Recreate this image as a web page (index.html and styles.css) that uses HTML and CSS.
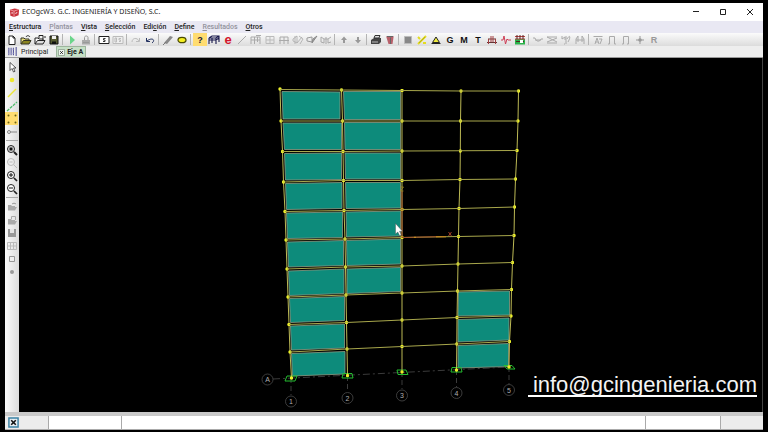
FILE: index.html
```html
<!DOCTYPE html>
<html lang="es">
<head>
<meta charset="utf-8">
<title>ECOgcW3</title>
<link rel="stylesheet" href="styles.css">
</head>
<body>
<div class="window">
  <header class="titlebar">
    <svg class="logo" viewBox="0 0 12 12"><path d="M1 3 6 1.500 11 2.500 10.500 9 5.500 11 1.500 9.500Z" fill="#c8323c"/><path d="M1 3 5.500 4.500 11 2.500M5.500 4.500V11" stroke="#f0a0a4" fill="none"/><path d="M2.500 6.500h2M7 7l2-1" stroke="#fff"/></svg>
    <h1>ECOgcW3. G.C. INGENIERÍA Y DISEÑO, S.C.</h1>
    <div class="controls">
      <button aria-label="Minimizar"><svg viewBox="0 0 12 12"><path d="M3 5.500h6"/></svg></button>
      <button aria-label="Maximizar"><svg viewBox="0 0 12 12"><path d="M3.500 3.500h5v5h-5z"/></svg></button>
      <button aria-label="Cerrar"><svg viewBox="0 0 12 12"><path d="m3 3 6 6M9 3 3 9"/></svg></button>
    </div>
  </header>

  <nav class="menu">
    <button><u>E</u>structura</button>
    <button disabled><u>P</u>lantas</button>
    <button><u>V</u>ista</button>
    <button><u>S</u>elección</button>
    <button>Edi<u>c</u>ión</button>
    <button><u>D</u>efine</button>
    <button disabled><u>R</u>esultados</button>
    <button><u>O</u>tros</button>
  </nav>

  <div class="toolbar">
    <button aria-label="Nuevo"><svg viewBox="0 0 12 12"><path d="M3 2h4l2 2v6.500H3zM7 2v2h2" fill="#fff" stroke="#222"/></svg></button>
    <button aria-label="Abrir"><svg viewBox="0 0 12 12"><path d="M1 10V4h3l1 1h4v2" fill="#e8e080" stroke="#332"/><path d="M1 10 3.500 6.500H11L9 10z" fill="#8a8420" stroke="#332"/><path d="M6 3c1-2 3-1.500 4 0" stroke="#222" fill="none"/></svg></button>
    <button aria-label="Importar"><svg viewBox="0 0 12 12"><path d="M1 10V4h3l1 1h4v2" fill="#fff" stroke="#222"/><path d="M1 10 3.500 6.500H11L9 10z" fill="#ddd" stroke="#222"/><path d="M5 4V1.500h4v4M10 3h2" stroke="#222" fill="none"/></svg></button>
    <button aria-label="Guardar"><svg viewBox="0 0 12 12"><path d="M2 2h8v8H2z" fill="#555a30" stroke="#111"/><path d="M4 2h4v3H4z" fill="#eee"/><path d="M4 7.500h4V10H4z" fill="#111"/></svg></button>
    <i></i>
    <button aria-label="Calcular"><svg viewBox="0 0 12 12"><path d="M4 1.500 9 6 4 10.500z" fill="#6bd58b"/></svg></button>
    <button aria-label="Bloquear"><svg viewBox="0 0 12 12"><path d="M2 6h8v4.500H2z" fill="#aaa"/><path d="M4.500 6V3.500c0-2 3.500-2 3.500 0V6M3 8.500h6" stroke="#999" fill="none"/></svg></button>
    <i></i>
    <button aria-label="Sección"><svg viewBox="0 0 12 12"><path d="M1 2.500h10v7H1z" fill="#fff" stroke="#222"/><path d="M7.500 4.500h-2v1.500h1.500v1.500h-2" stroke="#333" fill="none"/></svg></button>
    <button aria-label="Doble sección"><svg viewBox="0 0 12 12"><path d="M1 2.500h10v7H1z" fill="#eee" stroke="#bbb"/><path d="M3 4v4h1.500V4zM9 4.500H7V6h1.500v1.500H7" stroke="#bbb" fill="none"/></svg></button>
    <i></i>
    <button aria-label="Rehacer"><svg viewBox="0 0 12 12"><path d="M2 8c0-4 5-5 7-1M9.500 4v3.500H6" stroke="#bbb" fill="none"/></svg></button>
    <button aria-label="Deshacer"><svg viewBox="0 0 12 12"><path d="M8 9c4-3 0-6-5-2M2.500 4v3.500H6" stroke="#223060" fill="none"/></svg></button>
    <i></i>
    <button aria-label="Borrar"><svg viewBox="0 0 12 12"><path d="M2 9 8 2l3 1-6 7z" fill="#888"/><path d="M1 11l3-3" stroke="#777"/></svg></button>
    <button aria-label="Ver"><svg viewBox="0 0 12 12"><ellipse cx="6" cy="6" rx="4" ry="2.700" fill="#f4ee20" stroke="#4a4a00" stroke-width="1.300"/></svg></button>
    <i></i>
    <button class="active glyph navy" aria-label="Ayuda">?</button>
    <button aria-label="Estructura 3D"><svg viewBox="0 0 12 12"><path d="M1 4l3-2h7v4M1 4h7l3-2M1 4v6M4 4v5M8 4v6M11 2v6M1 6h7l3-2" stroke="#18184c" fill="none" stroke-width="1.100"/></svg></button>
    <button class="glyph red" aria-label="ECO">e</button>
    <button aria-label="Barra"><svg viewBox="0 0 12 12"><path d="M2 10 10 2" stroke="#aaa"/></svg></button>
    <button aria-label="Pórtico"><svg viewBox="0 0 12 12"><path d="M1 10V3h9v7M4.500 3v7M7.500 3v5M1 6h9M6 1.500h5" stroke="#aaa" fill="none"/></svg></button>
    <button aria-label="Retícula"><svg viewBox="0 0 12 12"><path d="M2 2.500h8v7H2zM6 2.500v7M2 6h8" stroke="#bbb" fill="none"/></svg></button>
    <button aria-label="Marco"><svg viewBox="0 0 12 12"><path d="M2 10V3h8v7M6 3v7M1 6.500h10" stroke="#aaa" fill="none"/></svg></button>
    <button aria-label="Dividir"><svg viewBox="0 0 12 12"><path d="m1 5 4-3v7L1 7zM7 2l4 3-3 5M5 9l5-6M3 2v8" stroke="#aaa" fill="none" stroke-width=".8"/></svg></button>
    <button aria-label="Rotar"><svg viewBox="0 0 12 12"><path d="m1 4 5-1v5L1 7z" stroke="#999" fill="none"/><path d="m6 9 5-7-4 3z" stroke="#888" fill="#aaa"/></svg></button>
    <button aria-label="Simetría"><svg viewBox="0 0 12 12"><path d="M1 3l3 2v4L1 8zM11 3 8 5v4l3-1M6 3v7M4 5h4" stroke="#aaa" fill="none"/></svg></button>
    <i></i>
    <button aria-label="Subir"><svg viewBox="0 0 12 12"><path d="M6 2.500 9 6H7v3H5V6H3z" fill="#999"/></svg></button>
    <button aria-label="Bajar"><svg viewBox="0 0 12 12"><path d="M6 9.500 9 6H7V3H5v3H3z" fill="#999"/></svg></button>
    <i></i>
    <button aria-label="Imprimir"><svg viewBox="0 0 12 12"><path d="M1 6 4 4h7v4L9 10H1z" fill="#444"/><path d="m4 4 1-2.500h5L9 4z" fill="#ddd" stroke="#333"/><path d="M2 8h6" stroke="#bbb"/></svg></button>
    <button aria-label="Perfil"><svg viewBox="0 0 12 12"><path d="M2.500 2h7v1.500L8.500 10h-4l-2-6.500z" fill="#b8606a"/><path d="M6.500 3.500V10M3 2.500h6" stroke="#666"/></svg></button>
    <i></i>
    <button aria-label="Sólido"><svg viewBox="0 0 12 12"><path d="M2.500 2.500h7v7h-7z" fill="#888" stroke="#bbb"/></svg></button>
    <button aria-label="Nudos"><svg viewBox="0 0 12 12"><path d="M2 10 10 2M2 3l2 2M7 9h3" stroke="#e4dc20" stroke-width="2"/><path d="m3 9 6-6" stroke="#a09a20" stroke-width=".7"/></svg></button>
    <button aria-label="Apoyo"><svg viewBox="0 0 12 12"><path d="M6 3 9.500 8.500h-7z" fill="#f1ec40" stroke="#222"/><path d="M1.500 9.500h9" stroke="#222"/></svg></button>
    <button class="glyph">G</button>
    <button class="glyph">M</button>
    <button class="glyph">T</button>
    <button aria-label="Cargas"><svg viewBox="0 0 12 12"><path d="M1 8.500h10M2 5h8" stroke="#633"/><path d="M2.500 5v5M5 2v6M7 2v6M9.500 5v5" stroke="#a33f40"/></svg></button>
    <button aria-label="Sismo"><svg viewBox="0 0 12 12"><path d="M1 6h2l1-4 1.500 8L7 5l1 1h3" stroke="#ce3d55" fill="none"/></svg></button>
    <button aria-label="Combinaciones"><svg viewBox="0 0 12 12"><path d="M1 5h10v5.500H1z" fill="#29b34a"/><path d="M1 2.500h10M1 5h10" stroke="#bb4040"/><path d="M3 1v4M6 1v4M9 1v4M2 7.500h8" stroke="#522"/><path d="M6 6h3v3H6z" fill="#fff"/></svg></button>
    <i></i>
    <button aria-label="Deformada"><svg viewBox="0 0 12 12"><path d="M1 4h2c1 4 5 4 6 1h2M3 6h6" stroke="#aaa" fill="none"/></svg></button>
    <button aria-label="Esfuerzos"><svg viewBox="0 0 12 12"><path d="M1 3h10M1 9h10M1 3l10 5M1 8l10-4" stroke="#aaa" fill="none"/></svg></button>
    <button aria-label="Modos"><svg viewBox="0 0 12 12"><path d="M2 2v3l3-2v3M6 2v8M7 5c3-5 4-2 1 3M4 10h1" stroke="#aaa" fill="none"/></svg></button>
    <button aria-label="Envolvente"><svg viewBox="0 0 12 12"><path d="M2 10V5l2-3v6M8 8V2l2 3v5M2 6h8" stroke="#aaa" fill="none"/></svg></button>
    <i></i>
    <button aria-label="Áreas"><svg viewBox="0 0 12 12"><path d="M1.500 2.500h9M3 10l2-6 2 6M3 8h3M7 5h3L8 10" stroke="#aaa" fill="none"/></svg></button>
    <button aria-label="Vano"><svg viewBox="0 0 12 12"><path d="M2 10h1.500V2.500h5V10H10" stroke="#aaa" fill="none"/></svg></button>
    <button aria-label="Muro"><svg viewBox="0 0 12 12"><path d="M2 10h1.500V2.500h5V10H7" stroke="#aaa" fill="none"/></svg></button>
    <button aria-label="Centro"><svg viewBox="0 0 12 12"><path d="M6 2v8M2 6h8" stroke="#999"/><circle cx="6" cy="6" r="1.800" fill="#999"/></svg></button>
    <button class="glyph muted">R</button>
  </div>

  <div class="tabs">
    <svg class="gridicon" viewBox="0 0 12 12"><path d="M2 2v8M4.500 2v8M7 2v8M10 1v10" stroke="#55559a" stroke-width="1.200"/><path d="M1 3.500h7M1 8h7" stroke="#a8a8d0" stroke-width=".6"/></svg>
    <button class="tab">Principal</button>
    <button class="tab selected"><svg viewBox="0 0 8 8"><path d="M.5.5h7v7h-7z" fill="#eef6ee" stroke="#90a090"/><path d="m2.500 2.500 3 3m0-3-3 3" stroke="#111"/></svg>Eje A</button>
  </div>

  <main class="work">
    <div class="side">
      <button aria-label="Seleccionar"><svg viewBox="0 0 12 12"><path d="M4 1.500v8l2-2 1.500 3.500 1.500-.7L7.500 7H10z" fill="#fff" stroke="#333" stroke-width=".8"/></svg></button>
      <button aria-label="Nudo"><svg viewBox="0 0 12 12"><circle cx="6" cy="6" r="2.300" fill="#eee82e"/></svg></button>
      <button aria-label="Línea"><svg viewBox="0 0 12 12"><path d="m2 10 8-8" stroke="#ece63a" stroke-width="1.400"/></svg></button>
      <button aria-label="Línea auxiliar"><svg viewBox="0 0 12 12"><path d="m1 11 10-9" stroke="#4cbc69" stroke-width="1.300" stroke-dasharray="3 1"/></svg></button>
      <button class="active" aria-label="Puntos"><svg viewBox="0 0 12 12"><g fill="#6b6213"><circle cx="2.500" cy="2.500" r="1"/><circle cx="9.500" cy="2.500" r="1"/><circle cx="2.500" cy="9.500" r="1"/><circle cx="9.500" cy="9.500" r="1"/></g></svg></button>
      <button aria-label="Articulación"><svg viewBox="0 0 12 12"><circle cx="3" cy="6" r="1.500" fill="none" stroke="#888"/><path d="M4.500 6H11" stroke="#888"/></svg></button>
      <i></i>
      <button aria-label="Zoom ventana"><svg viewBox="0 0 12 12"><circle cx="5" cy="5" r="3.500" fill="#ddd" stroke="#222"/><path d="M3.500 3.500h3v3h-3z" fill="#111"/><path d="m8 8 3 3" stroke="#222" stroke-width="2"/></svg></button>
      <button aria-label="Zoom previo"><svg viewBox="0 0 12 12"><circle cx="5" cy="5" r="3.500" fill="none" stroke="#bbb"/><path d="M3.500 5h3m1.500 3 3 3" stroke="#bbb"/></svg></button>
      <button aria-label="Acercar"><svg viewBox="0 0 12 12"><circle cx="5" cy="5" r="3.500" fill="#fff" stroke="#222"/><path d="M3 5h4M5 3v4" stroke="#111"/><path d="m8 8 3 3" stroke="#222" stroke-width="1.700"/></svg></button>
      <button aria-label="Alejar"><svg viewBox="0 0 12 12"><circle cx="5" cy="5" r="3.500" fill="#fff" stroke="#222"/><path d="M3 5h4" stroke="#111"/><path d="m8 8 3 3" stroke="#222" stroke-width="1.700"/></svg></button>
      <i></i>
      <button aria-label="Abrir vista"><svg viewBox="0 0 12 12"><path d="M2 9V4h3l1 1h3v1h2L9 9.500H2z" fill="#aaa"/><path d="M6 3c1-1 3-1 4 0" stroke="#999" fill="none"/></svg></button>
      <button aria-label="Importar vista"><svg viewBox="0 0 12 12"><path d="M2 10V5h3l1 1h3v1h2l-2 3.500H2z" fill="#aaa"/><path d="M5.500 5V2.500h4V6" stroke="#aaa" fill="none"/></svg></button>
      <button aria-label="Guardar vista"><svg viewBox="0 0 12 12"><path d="M2 2h8v8H2z" fill="#999"/><path d="M4 2h4v4H4z" fill="#e5e5e5"/></svg></button>
      <button aria-label="Rejilla"><svg viewBox="0 0 12 12"><path d="M1.500 2.500h9v7h-9zM4.500 2.500v7M7.500 2.500v7M1.500 6h9" stroke="#bbb" fill="none"/></svg></button>
      <button aria-label="Marco"><svg viewBox="0 0 12 12"><path d="M3.500 3.500h5v5h-5z" fill="#eee" stroke="#999"/></svg></button>
      <button aria-label="Punto"><svg viewBox="0 0 12 12"><circle cx="6" cy="6" r="2" fill="#999"/></svg></button>
    </div>

    <div class="canvas">
      <svg class="model" viewBox="19 58 743 354" role="img" aria-label="Alzado del eje A">
        <defs>
          <marker id="node" viewBox="0 0 4 4" refX="2" refY="2" markerWidth="3.400" markerHeight="3.400" markerUnits="userSpaceOnUse"><circle cx="2" cy="2" r="2" fill="#ecf029"/></marker>
        </defs>
        <g class="panels">
          <path d="M282 91.500 340 92v27H283z"/>
          <path d="M283 123h58.500v26.500H284.500z"/>
          <path d="M284.500 153.500 341.500 153v26.500L285.500 180z"/>
          <path d="M285.500 183.500 342 182.500v26L286.500 209.500z"/>
          <path d="M286.500 213 342.500 212v25.500L287.500 238.500z"/>
          <path d="M287.500 242 343.500 240.500v25L288.500 267z"/>
          <path d="M288.500 271 344 269v24.500L289.500 295.500z"/>
          <path d="M289.500 298.500 344.500 296.500v24L290.500 322.500z"/>
          <path d="M290.500 326 344.500 324v24L291.500 350z"/>
          <path d="M291.500 353.500 345 351.500v22.500L292.500 376z"/>
          <path d="M343.500 91.500h57V119.500H344.500z"/>
          <path d="M344.500 122.500h56V149.500H345z"/>
          <path d="M345 153h55.500V179H345.500z"/>
          <path d="M345.500 182.500H400.500V208L346 208.500z"/>
          <path d="M346 212 400.500 211v25L346.500 237z"/>
          <path d="M346.500 240.500 400.500 239v25L347 265.500z"/>
          <path d="M347 269 400.500 267.500V291.500L347 293.500z"/>
          <path d="M458.500 292 509.500 291V315L458 316z"/>
          <path d="M458 319.500 509 318v22L458 342z"/>
          <path d="M458 345.500 508.500 343.500v23L458 368z"/>
        </g>
        <g class="grid">
          <path d="M273 379 509 367" stroke-dasharray="7 3 2 3"/>
          <path d="M291 378v17M347.500 376v16M402 372v17M456.500 370v17M509 367v17" stroke-dasharray="5 3"/>
          <circle cx="267.500" cy="379.500" r="5.500"/><circle cx="291" cy="401.500" r="5.500"/><circle cx="347.500" cy="398" r="5.500"/><circle cx="402" cy="395.500" r="5.500"/><circle cx="456.500" cy="393" r="5.500"/><circle cx="509" cy="390" r="5.500"/>
        </g>
        <g class="marks">
          <text x="267.500" y="382">A</text><text x="291" y="404">1</text><text x="347.500" y="401">2</text><text x="402" y="398">3</text><text x="456.500" y="396">4</text><text x="509" y="393">5</text>
        </g>
        <g class="supports">
          <path d="M287 376h10l-2 5H285zM343 373.500h9l1 4.500H342zM397 370h9l2 4.500H398zM452 367.500h9l1 4.500H451zM504 365.500h8l3 3.500H507z"/>
        </g>
        <g class="bars">
          <path d="M280 89 281 121 282.500 151.500 283.500 182 285 211.500 286 240 287 269 288 297 289 324.500 290 352 291.500 378"/>
          <path d="M341.500 90 342.500 121 343 151.500 343.500 180.500 344 210.500 345 239 345.500 267 346 295 346.500 322.500 347 349 347.500 375.500"/>
          <path d="M402 90.500V121V151V180.500V209.500V237.500V266V293V320V346.500V372"/>
          <path d="M461 91 460.500 121 460.300 151 460 179.500 459 208.500 458.500 236.500 458 264 457.500 291 457 317.500 456.800 344 456.500 370"/>
          <path d="M518.500 91 518 121 517 150.500 515.500 179 514.500 207 514 235.500 512.500 262.500 511.500 289.500 511 316 509.500 341.500 509 367"/>
        </g>
        <g class="beams">
          <path d="M280 89.500 341.500 90 402 90.500 461 91H518.500M281 121H518M282.500 151.500H343L402 151 517 150.500M283.500 182 343.500 180.500H402L460 179.500 515.500 179M285 211.500 344 210.500 402 209.500 459 208.500 514.500 207M286 240 345 239 402 237.500 458.500 236.500 514 235.500M287 269 345.500 267 402 266 458 264 512.500 262.500M288 297 346 295 402 293 457.500 291 511.500 289.500M289 324.500 346.500 322.500 402 320 457 317.500 511 316M290 352 347 349 402 346.500 457 344 509.500 341.500"/>
        </g>
        <path class="axis" d="M402 191v46.500L446 236.500"/>
        <path d="M414 237.300h2M436 236.800h10" stroke="#c99a20"/>
        <path d="M400.500 187h3l-3 4h3" fill="none" stroke="#a8942a" stroke-width=".7"/>
        <path d="m448.500 232 3 4m0-4-3 4" stroke="#c84a30" stroke-width=".8"/>
        <path d="M395.500 223.500v10.500l2.300-2 1.700 3.500 1.700-.8-1.700-3.400h3z" fill="#fff" stroke="#444" stroke-width=".4"/>
      </svg>
      <a class="mail" href="mailto:info@gcingenieria.com">info@gcingenieria.com</a>
    </div>
  </main>

  <footer class="status">
    <div class="cell plain"><button aria-label="Cancelar"><svg viewBox="0 0 12 12"><path d="M1 1h10v10H1z" fill="#e4edf2" stroke="#3d83a5" stroke-width="1.600"/><path d="m3.500 3.500 5 5m0-5-5 5" stroke="#111" stroke-width="1.700"/></svg></button></div>
    <div class="cell"></div>
    <div class="cell"></div>
    <div class="cell"></div>
    <div class="cell plain"></div>
  </footer>
</div>
</body>
</html>
```
FILE: styles.css
```css
* { box-sizing: border-box; }

body {
  margin: 0;
  padding: 3px 5px 2px;
  min-height: 100vh;
  display: flex;
  background: #000;
  color: #222;
  font: 7px/10px Roboto, sans-serif;
}

button {
  margin: 0;
  padding: 0;
  border: 0;
  background: none;
  color: inherit;
  font: inherit;
}

svg { display: block; }

.window {
  flex: 1;
  min-width: 0;
  display: flex;
  flex-direction: column;
  background: #eee;
}

.titlebar {
  display: flex;
  align-items: center;
  height: 18px;
  padding-left: 4px;
  background: #fff;
}

.logo { width: 11px; height: 11px; margin-right: 2px; }

h1 {
  margin: 0;
  font: 400 7px/10px "Noto Sans", sans-serif;
}

.controls { display: flex; margin-left: auto; }

.controls button {
  display: grid;
  place-items: center;
  width: 27px;
  height: 18px;
}

.controls svg {
  width: 12px;
  height: 12px;
  fill: none;
  stroke: #222;
}

.menu {
  display: flex;
  align-items: center;
  gap: 8px;
  height: 12px;
  padding-left: 4px;
  background: #e9e8f3;
  font-weight: 500;
}

.menu button:disabled { color: #92929c; }

.toolbar {
  display: flex;
  align-items: center;
  height: 13px;
  background: linear-gradient(#fbfbfb, #dcdcdc);
}

.toolbar button {
  display: grid;
  place-items: center;
  width: 14px;
  height: 13px;
}

.toolbar svg, .side svg { width: 12px; height: 12px; }

.toolbar i {
  width: 1px;
  height: 11px;
  margin: 0 2px 0 1px;
  background: #b4b4b4;
}

.toolbar .glyph { font: 700 9px/12px "Liberation Sans", sans-serif; color: #111; }
.toolbar .navy { color: #222038; }
.toolbar .red { color: #d4142c; font-size: 13px; }
.toolbar .muted { color: #999; }

.toolbar .active, .side .active { background: #ffdc70; }

.tabs {
  display: flex;
  align-items: center;
  height: 12px;
  padding-left: 2px;
  border-bottom: 1px solid #999;
}

.gridicon { width: 11px; height: 11px; }

.tab {
  display: flex;
  align-items: center;
  gap: 2px;
  height: 11px;
  margin-left: 3px;
}

.tab.selected {
  margin-left: 8px;
  padding: 0 2px 0 1px;
  border: 1px solid #9db59d;
  border-bottom: 0;
  background: #c5dfc5;
  font-weight: 700;
}

.tab svg { width: 7px; height: 7px; }

.work { flex: 1; display: flex; min-height: 0; }

.side {
  width: 14px;
  padding-top: 2px;
  background: linear-gradient(90deg, #fafafa, #dcdcdc);
}

.side button {
  display: grid;
  place-items: center;
  width: 13px;
  height: 13px;
}

.side i {
  display: block;
  height: 1px;
  margin: 2px 1px;
  background: #aaa;
}

.canvas {
  position: relative;
  flex: 1;
  min-width: 0;
  border-right: 1px solid #444;
  background: #000;
}

.model { width: 100%; height: 100%; }

.panels path { fill: #0d8b7b; stroke: #8d9c83; stroke-width: .8; }
.bars path { fill: none; stroke: #bdba55; stroke-width: 1; marker: url(#node); }
.beams path { fill: none; stroke: #a9a84c; stroke-width: 1; }
.grid path, .grid circle { fill: none; stroke: #4a4a4a; stroke-width: .8; }
.marks text { fill: #b0b0b0; font: 7px "Liberation Sans", sans-serif; text-anchor: middle; }
.supports path { fill: none; stroke: #25bd30; stroke-width: 1; }
.axis { fill: none; stroke: #a04e28; stroke-width: 1; }

.mail {
  position: absolute;
  right: 5px;
  bottom: 15px;
  padding-left: 5px;
  border-bottom: 2px solid #fff;
  color: #f4f4f4;
  font: 22px/20px "Liberation Sans", sans-serif;
  text-decoration: none;
}

.status {
  display: grid;
  grid-template-columns: 43px 72px 1fr 74px 42px;
  gap: 1px;
  height: 18px;
  padding-bottom: 1px;
  border-top: 4px solid #c9c9c9;
  background: #aaa;
}

.cell { background: #fff; }
.cell.plain { background: #ececec; }
.cell button { display: block; margin: 1px 0 0 3px; }
.cell svg { width: 11px; height: 11px; }
```
